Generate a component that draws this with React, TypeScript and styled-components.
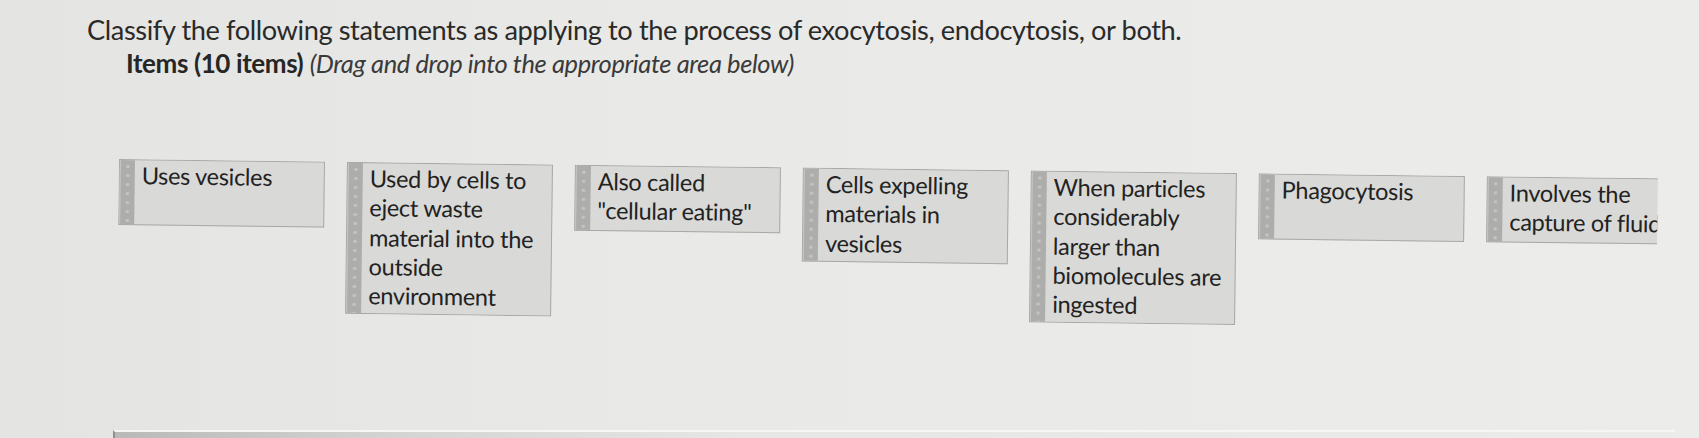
import React from "react";
import styled, { createGlobalStyle } from "styled-components";

const GlobalStyle = createGlobalStyle`
  html, body {
    margin: 0;
    padding: 0;
  }
  body {
    width: 1699px;
    height: 438px;
    overflow: hidden;
    background: linear-gradient(90deg, #e4e4e2 0%, #e9e9e7 40%, #ececea 100%);
    font-family: Lato, "Open Sans", sans-serif;
    color: #262626;
  }
`;

const Page = styled.div`
  padding: 13px 0 0 87px;
`;

const Title = styled.h1`
  margin: 0;
  font-size: 27.2px;
  font-weight: 400;
  line-height: 34px;
  letter-spacing: -0.4px;
  color: #2a2a2a;
`;

const ItemsHeading = styled.div`
  margin: 0 0 0 39px;
  font-size: 26px;
  line-height: 32px;
  letter-spacing: -0.4px;

  b {
    font-weight: 700;
  }
  i {
    font-size: 25.5px;
    color: #3a3a3a;
  }
`;

const Tray = styled.div`
  margin: 80px 0 0 32px;
  width: 1539px;
  display: flex;
  align-items: flex-start;
  gap: 22px;
  overflow: hidden;
  transform: rotate(0.72deg);
  transform-origin: left top;
`;

const Card = styled.div`
  flex: 0 0 206px;
  display: flex;
  min-height: 66px;
  background: #d9d9d7;
  border: 1px solid #a8a8a6;
  box-sizing: border-box;
`;

const Handle = styled.div`
  flex: 0 0 14px;
  background-color: #adadab;
  background-image: radial-gradient(circle, #c4c4c2 1.4px, transparent 2px);
  background-size: 14px 9px;
  background-position: 0 2px;
  border-left: 1px solid #c6c6c4;
`;

const CardText = styled.div`
  flex: 1;
  padding: 1px 4px 3px 7px;
  font-size: 23.5px;
  line-height: 29.3px;
  letter-spacing: -0.3px;
  color: #222;
  white-space: nowrap;
  overflow: hidden;
`;

const DropZone = styled.div`
  margin: 0 0 0 26px;
  width: 1560px;
  height: 60px;
  border-top: 2px solid #f6f6f4;
  border-left: 2px solid #8f8f8d;
  background: linear-gradient(90deg, #b9b9b7 0%, #d4d4d2 18%, #e6e6e4 40%, #ebebe9 100%);
`;

const Spacer = styled.div<{ $h: number }>`
  height: ${(p) => p.$h}px;
`;

const items: string[][] = [
  ["Uses vesicles"],
  ["Used by cells to", "eject waste", "material into the", "outside", "environment"],
  ["Also called", '"cellular eating"'],
  ["Cells expelling", "materials in", "vesicles"],
  ["When particles", "considerably", "larger than", "biomolecules are", "ingested"],
  ["Phagocytosis"],
  ["Involves the", "capture of fluid"],
];

const App = () => {
  return (
    <>
      <GlobalStyle />
      <Page>
        <Title>
          Classify the following statements as applying to the process of
          exocytosis, endocytosis, or both.
        </Title>
        <ItemsHeading>
          <b>Items (10 items)</b> <i>(Drag and drop into the appropriate area below)</i>
        </ItemsHeading>
        <Tray>
          {items.map((lines) => (
            <Card key={lines.join(" ")}>
              <Handle />
              <CardText>
                {lines.map((l, i) => (
                  <div key={i}>{l}</div>
                ))}
              </CardText>
            </Card>
          ))}
        </Tray>
        <Spacer $h={119} />
        <DropZone />
      </Page>
    </>
  );
};

export default App;
